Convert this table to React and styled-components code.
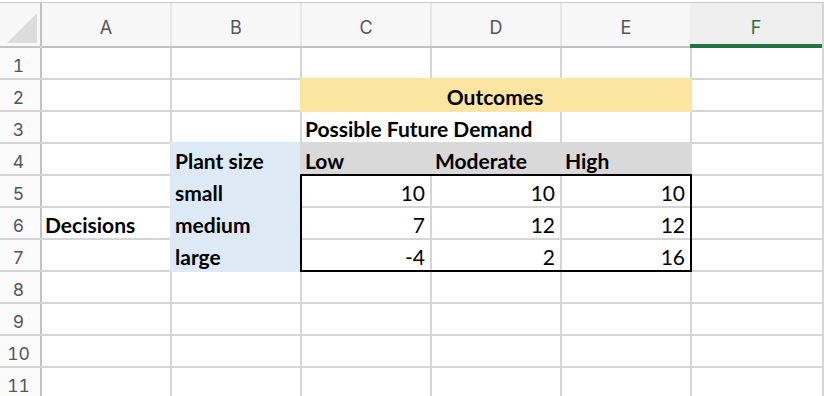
import React from 'react';
import styled, { createGlobalStyle, css } from 'styled-components';

const GRID_LINE = '#d5d5d5';
const HEADER_LINE = '#c2c2c2';
const ACCENT = '#237346';
const YELLOW = '#fce4a1';
const BLUE = '#dde9f5';
const GREY = '#d9d9d9';

const COLUMNS = ['A', 'B', 'C', 'D', 'E', 'F'];
const ROW_COUNT = 11;
const ACTIVE_COLUMN = 'F';

// Labels and shaded cells, keyed by row number then column letter
const SHEET = {
  2: { C: { text: 'Outcomes', span: 3, fill: YELLOW, bold: true, align: 'center' } },
  3: { C: { text: 'Possible Future Demand', span: 2, bold: true } },
  4: {
    B: { text: 'Plant size', fill: BLUE, bold: true },
    C: { text: 'Low', fill: GREY, bold: true },
    D: { text: 'Moderate', fill: GREY, bold: true },
    E: { text: 'High', fill: GREY, bold: true },
  },
  5: { B: { text: 'small', fill: BLUE, bold: true } },
  6: {
    A: { text: 'Decisions', bold: true },
    B: { text: 'medium', fill: BLUE, bold: true },
  },
  7: { B: { text: 'large', fill: BLUE, bold: true } },
};

// Payoff table in C5:E7, drawn inside a bordered block
const PAYOFFS = [
  [10, 10, 10],
  [7, 12, 12],
  [-4, 2, 16],
];
const BLOCK_ROWS = [5, 7];
const BLOCK_COLS = [2, 4];

const GlobalStyle = createGlobalStyle`
  html, body {
    margin: 0;
    padding: 0;
    background: #ffffff;
    overflow: hidden;
  }
`;

const Frame = styled.div`
  width: 824px;
  height: 396px;
  overflow: hidden;
  padding-top: 2px;
  box-sizing: border-box;
  background: #ffffff;
`;

const Sheet = styled.div`
  display: grid;
  grid-template-columns: 40px repeat(5, 128px) 130px;
  grid-template-rows: 43px repeat(${ROW_COUNT}, 30px);
  gap: 2px;
  padding-right: 2px;
  width: max-content;
  background: ${GRID_LINE};
  border-top: 1px solid #cbcbcb;
`;

const Corner = styled.div`
  display: flex;
  align-items: flex-end;
  justify-content: flex-end;
  padding: 0 3px 3px 0;
  background: #f7f7f7;
  box-shadow: 2px 0 0 ${HEADER_LINE}, 0 2px 0 ${HEADER_LINE};
`;

const CornerMark = styled.span`
  width: 30px;
  height: 30px;
  background: #dcdcdc;
  clip-path: polygon(100% 0, 100% 100%, 0 100%);
`;

const ColumnHeader = styled.div`
  display: flex;
  align-items: center;
  justify-content: center;
  padding-top: 6px;
  font-family: Inter, 'Open Sans', sans-serif;
  font-size: 18px;
  color: #555555;
  background: #f7f7f7;
  box-shadow: 2px 0 0 #e6e6e6, 0 2px 0 ${HEADER_LINE}, 2px 2px 0 ${HEADER_LINE};

  ${(p) =>
    p.$active &&
    css`
      margin: 0 0 -2px -2px;
      padding-top: 8px;
      color: ${ACCENT};
      background: #efefef;
      border-bottom: 4px solid ${ACCENT};
      box-shadow: none;
    `}
`;

const RowHeader = styled.div`
  display: flex;
  align-items: flex-end;
  justify-content: center;
  padding: 0 3px 4px 0;
  font-family: Inter, 'Open Sans', sans-serif;
  font-size: 17.5px;
  font-variant-numeric: tabular-nums;
  line-height: 1;
  color: #555555;
  background: #fbfbfb;
  box-shadow: 2px 0 0 ${HEADER_LINE};
`;

const Cell = styled.div`
  grid-column: span ${(p) => p.$span || 1};
  display: flex;
  align-items: flex-end;
  justify-content: ${(p) =>
    p.$align === 'right' ? 'flex-end' : p.$align === 'center' ? 'center' : 'flex-start'};
  padding: 0 5px 3px 3px;
  font-family: Lato, 'Open Sans', sans-serif;
  font-size: 21px;
  font-weight: ${(p) => (p.$bold ? 700 : 400)};
  line-height: 1;
  color: #000000;
  white-space: nowrap;
  background: ${(p) => p.$fill || '#ffffff'};
  box-shadow: ${(p) => (p.$fill ? `0 0 0 2px ${p.$fill}` : 'none')};
`;

const DataBlock = styled.div`
  grid-column: ${BLOCK_COLS[0] + 2} / ${BLOCK_COLS[1] + 3};
  grid-row: ${BLOCK_ROWS[0] + 1} / ${BLOCK_ROWS[1] + 2};
  margin: -2px;
  display: grid;
  grid-template-columns: repeat(3, 128px);
  grid-template-rows: repeat(3, 30px);
  gap: 2px;
  background: ${GRID_LINE};
  border: 2px solid #000000;
`;

const inBlock = (row, colIndex) =>
  row >= BLOCK_ROWS[0] &&
  row <= BLOCK_ROWS[1] &&
  colIndex >= BLOCK_COLS[0] &&
  colIndex <= BLOCK_COLS[1];

function renderRow(row) {
  const items = [<RowHeader key={`h${row}`}>{row}</RowHeader>];
  let c = 0;
  while (c < COLUMNS.length) {
    if (inBlock(row, c)) {
      c += 1;
      continue;
    }
    const col = COLUMNS[c];
    const spec = (SHEET[row] && SHEET[row][col]) || {};
    const span = spec.span || 1;
    items.push(
      <Cell
        key={`${col}${row}`}
        $span={span}
        $fill={spec.fill}
        $bold={spec.bold}
        $align={spec.align}
      >
        {spec.text}
      </Cell>
    );
    c += span;
  }
  return items;
}

export default function App() {
  const rows = Array.from({ length: ROW_COUNT }, (_, i) => i + 1);
  return (
    <>
      <GlobalStyle />
      <Frame>
        <Sheet>
          <Corner>
            <CornerMark />
          </Corner>
          {COLUMNS.map((col) => (
            <ColumnHeader key={col} $active={col === ACTIVE_COLUMN}>
              {col}
            </ColumnHeader>
          ))}
          {rows.map((row) => renderRow(row))}
          <DataBlock>
            {PAYOFFS.flat().map((value, i) => (
              <Cell key={i} $align="right">
                {value}
              </Cell>
            ))}
          </DataBlock>
        </Sheet>
      </Frame>
    </>
  );
}
